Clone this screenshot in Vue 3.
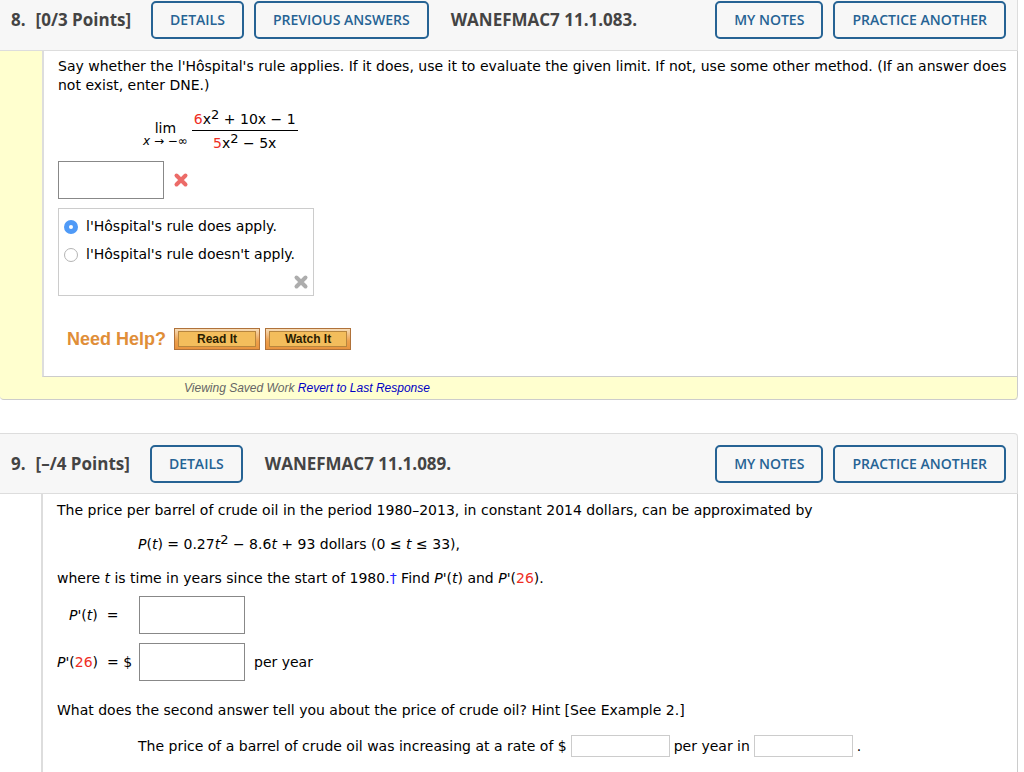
<script setup>
import { ref } from 'vue'

const rule = ref('does')
const limit = ref('')
const derivative = ref('')
const value = ref('')
const rate = ref('')
const year = ref('')
</script>

<template>
  <main class="page">
    <section class="question answered">
      <header class="bar first">
        <span class="number">8.</span>
        <span class="points">[0/3 Points]</span>
        <button type="button" class="btn">DETAILS</button>
        <button type="button" class="btn">PREVIOUS ANSWERS</button>
        <span class="code">WANEFMAC7 11.1.083.</span>
        <span class="actions">
          <button type="button" class="btn">MY NOTES</button>
          <button type="button" class="btn">PRACTICE ANOTHER</button>
        </span>
      </header>
      <div class="body">
        <p class="line">Say whether the l'Hôspital's rule applies. If it does, use it to evaluate the given limit. If not, use some other method. (If an answer does not exist, enter DNE.)</p>
        <div class="formula">
          <span class="lim"><span>lim</span><small><i>x</i> → −∞</small></span>
          <span class="fraction">
            <span class="top"><b class="red">6</b>x<sup>2</sup> + 10x − 1</span>
            <span><b class="red">5</b>x<sup>2</sup> − 5x</span>
          </span>
        </div>
        <div class="answer">
          <input v-model="limit" class="box" type="text" aria-label="Limit">
          <svg class="mark" viewBox="0 0 16 16" role="img" aria-label="Incorrect"><path d="M3.5 3.5 12.5 12.5M12.5 3.5 3.5 12.5" stroke="#ec6b68" /></svg>
        </div>
        <div class="choices">
          <label><input v-model="rule" type="radio" name="rule" value="does">l'Hôspital's rule does apply.</label>
          <label><input v-model="rule" type="radio" name="rule" value="doesnt">l'Hôspital's rule doesn't apply.</label>
          <svg class="mark" viewBox="0 0 16 16" role="img" aria-label="Not graded"><path d="M3.5 3.5 12.5 12.5M12.5 3.5 3.5 12.5" stroke="#adadad" /></svg>
        </div>
        <div class="help">
          <strong>Need Help?</strong>
          <button type="button"><span>Read It</span></button>
          <button type="button"><span>Watch It</span></button>
        </div>
      </div>
      <footer class="saved">Viewing Saved Work <a href="#">Revert to Last Response</a></footer>
    </section>

    <section class="question open">
      <header class="bar">
        <span class="number">9.</span>
        <span class="points">[–/4 Points]</span>
        <button type="button" class="btn">DETAILS</button>
        <span class="code">WANEFMAC7 11.1.089.</span>
        <span class="actions">
          <button type="button" class="btn">MY NOTES</button>
          <button type="button" class="btn">PRACTICE ANOTHER</button>
        </span>
      </header>
      <div class="body">
        <p class="line">The price per barrel of crude oil in the period 1980–2013, in constant 2014 dollars, can be approximated by</p>
        <p class="line indent"><i>P</i>(<i>t</i>) = 0.27<i>t</i><sup>2</sup> − 8.6<i>t</i> + 93 dollars (0 ≤ <i>t</i> ≤ 33),</p>
        <p class="line">where <i>t</i> is time in years since the start of 1980.<a class="note" href="#">†</a> Find <i>P'</i>(<i>t</i>) and <i>P'</i>(<b class="red">26</b>).</p>
        <div class="entries">
          <label class="first-label" for="derivative"><i>P'</i>(<i>t</i>)&nbsp; =</label>
          <input id="derivative" v-model="derivative" class="box" type="text">
          <span></span>
          <label for="value"><i>P'</i>(<b class="red">26</b>)&nbsp; = $</label>
          <input id="value" v-model="value" class="box" type="text">
          <span class="unit">per year</span>
        </div>
        <p class="line">What does the second answer tell you about the price of crude oil? Hint [See Example 2.]</p>
        <div class="sentence">
          <label for="rate">The price of a barrel of crude oil was increasing at a rate of $</label>
          <input id="rate" v-model="rate" type="text">
          <label for="year">per year in</label>
          <input id="year" v-model="year" type="text">
          <span>.</span>
        </div>
      </div>
    </section>
  </main>
</template>

<style>
body {
  margin: 0;
  background: #fff;
}
</style>

<style scoped>
.page {
  padding-right: 6px;
  font: 14px/19px Verdana, "DejaVu Sans", sans-serif;
  color: #000;
}
.page * {
  box-sizing: border-box;
}
.bar {
  display: flex;
  align-items: center;
  padding: 11px 11px 10px 11px;
  background: #f7f7f7;
  border: 1px solid #ddd;
  border-width: 1px 1px 1px 0;
  border-radius: 0 4px 0 0;
  font: 700 17px/22px "Open Sans", sans-serif;
  color: #444;
  white-space: nowrap;
}
.bar.first {
  padding-top: 1px;
  padding-bottom: 11px;
  border-top: 0;
  border-radius: 0;
}
.points {
  margin: 0 20px 0 10px;
}
.btn {
  height: 38px;
  padding: 0 17px;
  border: 2px solid #266394;
  border-radius: 5px;
  background: transparent;
  color: #266394;
  font: 600 14px/20px "Open Sans", sans-serif;
}
.btn + .btn {
  margin-left: 10px;
}
.code {
  margin-left: 22px;
}
.actions {
  display: flex;
  margin-left: auto;
}
.body {
  background: #fff;
  border-left: 2px solid #ddd;
  border-right: 1px solid #ccc;
}
.answered {
  background: #ffffcf;
  border-bottom: 1px solid #ccc;
  border-radius: 0 0 4px 4px;
}
.answered .body {
  margin-left: 42px;
  padding: 6px 6px 26px 14px;
  border-bottom: 1px solid #ccc;
}
.line {
  margin: 0;
}
.red {
  color: #ee2e24;
  font-weight: 400;
}
sup {
  font-size: 13px;
  line-height: 0;
  vertical-align: 5px;
}
.formula {
  display: flex;
  align-items: center;
  gap: 4px;
  margin: 14px 0 8px 85px;
}
.lim {
  display: flex;
  flex-direction: column;
  align-items: center;
  padding-top: 6px;
  line-height: 13px;
}
.lim small {
  font-size: 12px;
  line-height: 12px;
}
.fraction {
  display: flex;
  flex-direction: column;
  align-items: center;
}
.fraction .top {
  padding: 0 2px 1px 2px;
  border-bottom: 1px solid #000;
}
.fraction span {
  line-height: 20px;
}
.fraction span + span {
  padding-top: 2px;
}
.answer {
  display: flex;
  align-items: center;
  gap: 9px;
}
.box {
  width: 106px;
  height: 38px;
  border: 1px solid #888;
  background: #fff;
}
.mark {
  width: 16px;
  height: 16px;
  fill: none;
  stroke-width: 4;
  stroke-linecap: round;
}
.choices {
  display: flex;
  flex-direction: column;
  width: 256px;
  margin-top: 9px;
  padding: 8px 4px 5px 5px;
  border: 1px solid #ccc;
}
.choices label {
  display: flex;
  align-items: center;
  gap: 8px;
  height: 19px;
  white-space: nowrap;
}
.choices label + label {
  margin-top: 9px;
}
.choices input {
  appearance: none;
  width: 14px;
  height: 14px;
  margin: 0;
  border: 1px solid #b4b4b4;
  border-radius: 50%;
  background: #fff;
}
.choices input:checked {
  border: 5px solid #4f9af7;
}
.choices .mark {
  align-self: flex-end;
  margin-top: 10px;
}
.help {
  display: flex;
  align-items: center;
  gap: 5px;
  margin: 32px 0 0 9px;
}
.help strong {
  margin-right: 3px;
  color: #e08e38;
  font: 700 18px/22px "Liberation Sans", sans-serif;
}
.help button {
  display: flex;
  width: 86px;
  height: 22px;
  padding: 2px 3px;
  border: 1px solid #b0723a;
  background: linear-gradient(#f6dcb8, #eda04c 60%, #e8943f);
  color: #2a1c00;
  font: 700 12px/14px "Liberation Sans", sans-serif;
}
.help button span {
  flex: 1;
  border: 1px solid #b8863e;
  background: #f3bd5c;
}
.saved {
  padding: 1px 0 1px 184px;
  border-right: 1px solid #ccc;
  border-radius: 0 0 4px 0;
  color: #666;
  font: italic 12px/20px "Liberation Sans", sans-serif;
}
.saved a {
  color: #0000c4;
  text-decoration: none;
}
.open {
  margin-top: 33px;
}
.open .body {
  margin-left: 41px;
  padding: 7px 14px 24px 14px;
}
.open .line + .line {
  margin-top: 15px;
}
.indent {
  margin-left: 81px;
}
.note {
  color: #22f;
  text-decoration: none;
}
.entries {
  display: grid;
  grid-template-columns: 76px 106px auto;
  align-items: center;
  gap: 9px 6px;
  margin: 8px 0 20px 0;
  white-space: nowrap;
}
.first-label {
  padding-left: 12px;
}
.unit {
  padding-left: 3px;
}
.sentence {
  display: flex;
  align-items: center;
  gap: 4px;
  margin: 15px 0 0 81px;
  white-space: nowrap;
}
.sentence input {
  width: 99px;
  height: 22px;
  border: 1px solid #ccc;
}
</style>
